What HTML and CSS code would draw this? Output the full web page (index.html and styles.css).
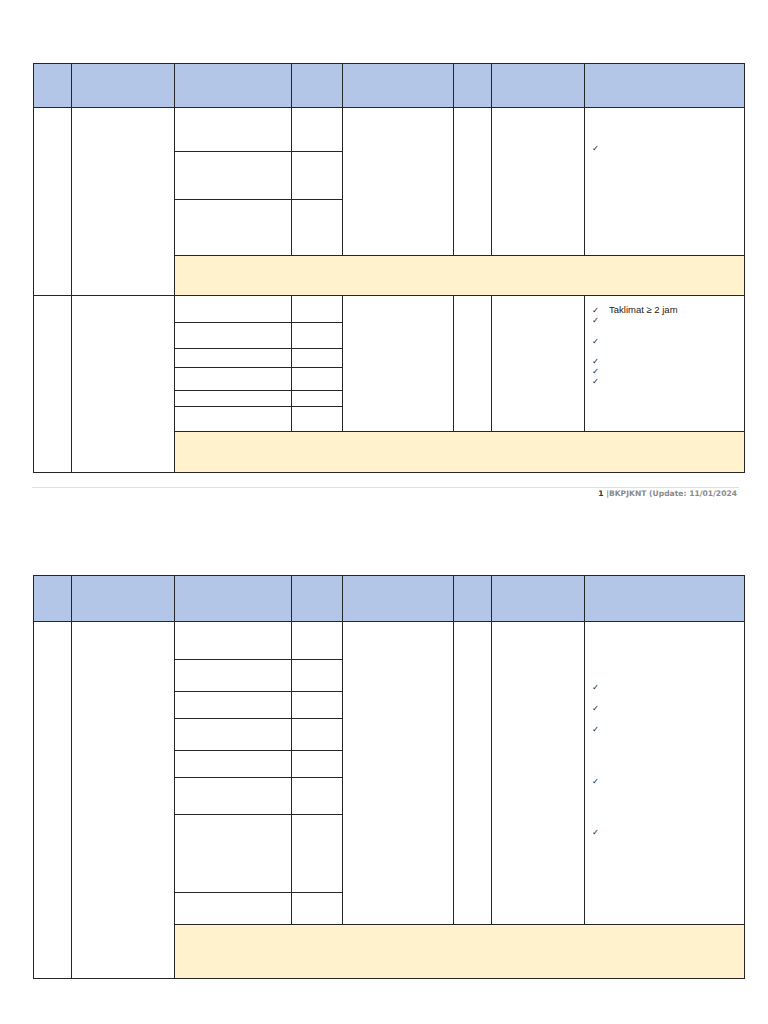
FILE: index.html
```html
<!DOCTYPE html>
<html lang="ms">
<head>
<meta charset="utf-8">
<title>BKPJKNT</title>
<link rel="stylesheet" href="styles.css">
</head>
<body>
<div class="page">
  <div class="tbl t1">
    <div class="h"></div><div class="h"></div><div class="h"></div><div class="h"></div>
    <div class="h"></div><div class="h"></div><div class="h"></div><div class="h"></div>

    <div class="c r4"></div><div class="c r4"></div>
    <div class="c"></div><div class="c"></div>
    <div class="c r3"></div><div class="c r3"></div><div class="c r3"></div>
    <div class="c r3 notes n1">
      <div class="ln"><span class="ck">✓</span></div>
    </div>
    <div class="c"></div><div class="c"></div>
    <div class="c"></div><div class="c"></div>
    <div class="y"></div>

    <div class="c r7"></div><div class="c r7"></div>
    <div class="c"></div><div class="c"></div>
    <div class="c r6"></div><div class="c r6"></div><div class="c r6"></div>
    <div class="c r6 notes n2">
      <div class="ln"><span class="ck">✓</span><span class="tx">Taklimat ≥ 2 jam</span></div>
      <div class="ln"><span class="ck">✓</span></div>
      <div class="ln"></div>
      <div class="ln"><span class="ck">✓</span></div>
      <div class="ln"></div>
      <div class="ln"><span class="ck">✓</span></div>
      <div class="ln"><span class="ck">✓</span></div>
      <div class="ln"><span class="ck">✓</span></div>
    </div>
    <div class="c"></div><div class="c"></div>
    <div class="c"></div><div class="c"></div>
    <div class="c"></div><div class="c"></div>
    <div class="c"></div><div class="c"></div>
    <div class="c"></div><div class="c"></div>
    <div class="y"></div>
  </div>

  <div class="footer"><span class="pg">1</span> |BKPJKNT (Update: 11/01/2024</div>

  <div class="tbl t2">
    <div class="h"></div><div class="h"></div><div class="h"></div><div class="h"></div>
    <div class="h"></div><div class="h"></div><div class="h"></div><div class="h"></div>

    <div class="c r9"></div><div class="c r9"></div>
    <div class="c"></div><div class="c"></div>
    <div class="c r8"></div><div class="c r8"></div><div class="c r8"></div>
    <div class="c r8 notes n3">
      <div class="ln"><span class="ck">✓</span></div>
      <div class="ln"></div>
      <div class="ln"><span class="ck">✓</span></div>
      <div class="ln"></div>
      <div class="ln"><span class="ck">✓</span></div>
      <div class="ln"></div><div class="ln"></div><div class="ln"></div><div class="ln"></div>
      <div class="ln"><span class="ck">✓</span></div>
      <div class="ln"></div><div class="ln"></div><div class="ln"></div><div class="ln"></div>
      <div class="ln"><span class="ck">✓</span></div>
    </div>
    <div class="c"></div><div class="c"></div>
    <div class="c"></div><div class="c"></div>
    <div class="c"></div><div class="c"></div>
    <div class="c"></div><div class="c"></div>
    <div class="c"></div><div class="c"></div>
    <div class="c"></div><div class="c"></div>
    <div class="c"></div><div class="c"></div>
    <div class="y"></div>
  </div>
</div>
</body>
</html>
```

FILE: styles.css
```css
html, body {
  margin: 0;
  padding: 0;
  background: #ffffff;
}

body {
  font-family: "Liberation Sans", Arial, sans-serif;
  color: #222;
}

.page {
  padding: 63px 0 0 33px;
}

.tbl {
  display: grid;
  width: 712px;
  box-sizing: border-box;
  padding: 1px;
  gap: 1px;
  background: #262626;
  grid-template-columns: 37px 102px 116px 50px 110px 37px 92px 159px;
}

.t1 {
  grid-template-rows: 43px 43px 47px 55px 39px 26px 25px 18px 22px 15px 24px 40px;
}

.t2 {
  margin-top: 76px;
  grid-template-rows: 45px 37px 31px 26px 31px 26px 36px 77px 31px 53px;
}

.h {
  background: #b4c6e7;
}

.c {
  background: #ffffff;
}

.y {
  background: #fff2cc;
  grid-column: span 6;
}

.r3 { grid-row: span 3; }
.r4 { grid-row: span 4; }
.r6 { grid-row: span 6; }
.r7 { grid-row: span 7; }
.r8 { grid-row: span 8; }
.r9 { grid-row: span 9; }

.notes {
  padding-left: 7px;
  font-size: 9px;
}

.n1 { padding-top: 35px; }
.n2 { padding-top: 9px; }
.n3 { padding-top: 60px; }

.ln {
  display: flex;
  align-items: center;
  height: 10.2px;
  line-height: 10.2px;
}

.n3 .ln {
  height: 10.4px;
  line-height: 10.4px;
}

.ck {
  display: inline-block;
  width: 17px;
  font-family: "DejaVu Sans", sans-serif;
  font-size: 8.5px;
  color: #2a2a2a;
}

.tx {
  font-family: "Liberation Sans", Arial, sans-serif;
  font-size: 9.5px;
  color: #222;
}

.footer {
  width: 707px;
  margin: 14px 0 0 -1px;
  border-top: 1px solid #dedede;
  padding: 1px 2px 0 0;
  box-sizing: border-box;
  text-align: right;
  font-family: "DejaVu Sans", sans-serif;
  font-weight: bold;
  font-size: 7.6px;
  line-height: 10px;
  color: #8a8a8a;
}

.pg {
  color: #333;
}
```
